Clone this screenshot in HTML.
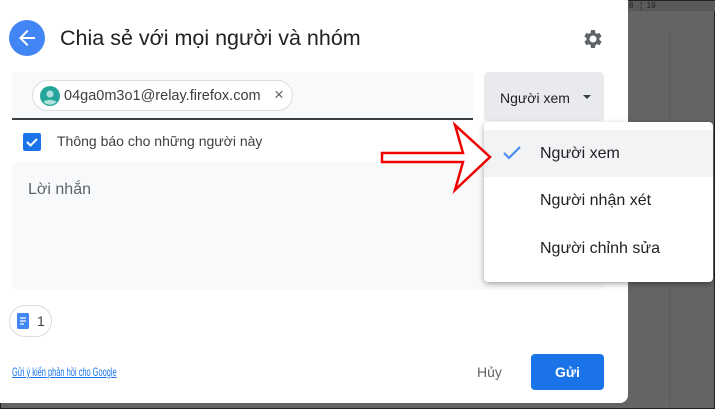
<!DOCTYPE html>
<html><head><meta charset="utf-8"><style>
*{margin:0;padding:0;box-sizing:border-box}
body{width:715px;height:409px;overflow:hidden;background:#646464;font-family:"Liberation Sans",sans-serif;position:relative;border:1px solid #222}
.a{position:absolute}
</style></head><body>
<div class="a" style="left:627px;top:0;width:88px;height:10px;background:#5a5a5a;border-bottom:1px solid #555"></div>
<div class="a" style="left:628px;top:0;font-size:8px;color:#222">8 &nbsp; ¦ &nbsp;19</div>
<div class="a" style="left:668px;top:26px;width:1px;height:380px;background:#5c5c5c"></div>
<div class="a" style="left:-1px;top:-1px;width:628px;height:403px;background:#fff;border-radius:0 0 8px 0"></div>
<div class="a" style="left:8px;top:19px;width:36px;height:36px;border-radius:50%;background:#4285f4"></div>
<svg class="a" style="left:14px;top:25px" width="24" height="24" viewBox="0 0 24 24"><path d="M20 11H7.8l5.6-5.6L12 4l-8 8 8 8 1.4-1.4L7.8 13H20z" fill="#fff"/></svg>
<div class="a" style="left:59px;top:25px;font-size:21.5px;color:#202124">Chia sẻ với mọi người và nhóm</div>
<svg class="a" style="left:580px;top:26px" width="24" height="24" viewBox="0 0 24 24"><path fill="#5f6368" d="M19.4 13a7.5 7.5 0 000-2l2.1-1.6-2-3.5-2.5 1a7 7 0 00-1.7-1L15 3h-4l-.4 2.9a7 7 0 00-1.7 1l-2.5-1-2 3.5L6.5 11a7.5 7.5 0 000 2l-2.1 1.6 2 3.5 2.5-1a7 7 0 001.7 1L11 21h4l.4-2.9a7 7 0 001.7-1l2.5 1 2-3.5zM13 15.5A3.5 3.5 0 1113 8.5a3.5 3.5 0 010 7z" transform="translate(-1 0)"/></svg>
<div class="a" style="left:11px;top:71px;width:461px;height:48px;background:#f8f9fa;border-bottom:2px solid #3c4043"></div>
<div class="a" style="left:31px;top:79px;width:261px;height:31px;border:1px solid #dadce0;border-radius:16px;background:#fff"></div>
<svg class="a" style="left:39px;top:85px" width="20" height="20" viewBox="0 0 20 20"><circle cx="10" cy="10" r="10" fill="#26a69a"/><circle cx="10" cy="8" r="3.5" fill="#b2dfdb"/><path d="M3.5 16a8 5 0 0113 0 9 9 0 01-13 0z" fill="#b2dfdb"/></svg>
<div class="a" style="left:63px;top:87px;font-size:14.5px;color:#3c4043">04ga0m3o1@relay.firefox.com</div>
<div class="a" style="left:273px;top:84px;font-size:17px;color:#5f6368">×</div>
<div class="a" style="left:483px;top:71px;width:120px;height:49px;background:#e8eaed;border-radius:4px"></div>
<div class="a" style="left:499px;top:89px;font-size:14px;color:#202124">Người xem</div>
<div class="a" style="left:582px;top:94px;border-left:4px solid transparent;border-right:4px solid transparent;border-top:4px solid #3c4043"></div>
<div class="a" style="left:22px;top:132px;width:18px;height:18px;border-radius:2px;background:#1a73e8"></div>
<svg class="a" style="left:22px;top:132px" width="18" height="18" viewBox="0 0 18 18"><path d="M4 9l3.5 3.5L14 6" stroke="#fff" stroke-width="2" fill="none"/></svg>
<div class="a" style="left:56px;top:132px;font-size:14px;color:#3c4043">Thông báo cho những người này</div>
<div class="a" style="left:11px;top:161px;width:592px;height:128px;background:#f8f9fa;border-radius:4px"></div>
<div class="a" style="left:27px;top:180px;font-size:16px;color:#5f6368">Lời nhắn</div>
<div class="a" style="left:483px;top:121px;width:229px;height:160px;background:#fff;border-radius:4px;box-shadow:0 2px 6px rgba(0,0,0,.35)"></div>
<div class="a" style="left:483px;top:129px;width:229px;height:47px;background:#f1f3f4"></div>
<svg class="a" style="left:501px;top:144px" width="20" height="16" viewBox="0 0 20 16"><path d="M2 8l5 5L18 2" stroke="#4285f4" stroke-width="2" fill="none"/></svg>
<div class="a" style="left:539px;top:144px;font-size:16px;color:#202124">Người xem</div>
<div class="a" style="left:539px;top:191px;font-size:16px;color:#202124">Người nhận xét</div>
<div class="a" style="left:539px;top:239px;font-size:16px;color:#202124">Người chỉnh sửa</div>
<svg class="a" style="left:374px;top:119px" width="120" height="75" viewBox="0 0 120 75"><path d="M7 33H88L80 5L115 37L80 70L88 42H7Z" fill="#fff" stroke="#e00" stroke-width="2.5" stroke-linejoin="miter"/></svg>
<div class="a" style="left:8px;top:304px;width:43px;height:32px;border:1px solid #dadce0;border-radius:16px"></div>
<svg class="a" style="left:16px;top:312px" width="12" height="16" viewBox="0 0 12 16"><rect width="12" height="16" rx="1.5" fill="#4285f4"/><path d="M3 5h6M3 8h6M3 11h4" stroke="#fff" stroke-width="1.3"/></svg>
<div class="a" style="left:36px;top:312px;font-size:14px;color:#3c4043">1</div>
<div class="a" style="left:11px;top:364px;font-size:12px;color:#1a73e8;text-decoration:underline;transform:scaleX(.62);transform-origin:0 0;white-space:nowrap">Gửi ý kiến phản hồi cho Google</div>
<div class="a" style="left:476px;top:363px;font-size:14px;color:#5f6368">Hủy</div>
<div class="a" style="left:530px;top:353px;width:73px;height:36px;background:#1a73e8;border-radius:4px;color:#fff;font-size:14px;font-weight:bold;text-align:center;line-height:36px">Gửi</div>
</body></html>
